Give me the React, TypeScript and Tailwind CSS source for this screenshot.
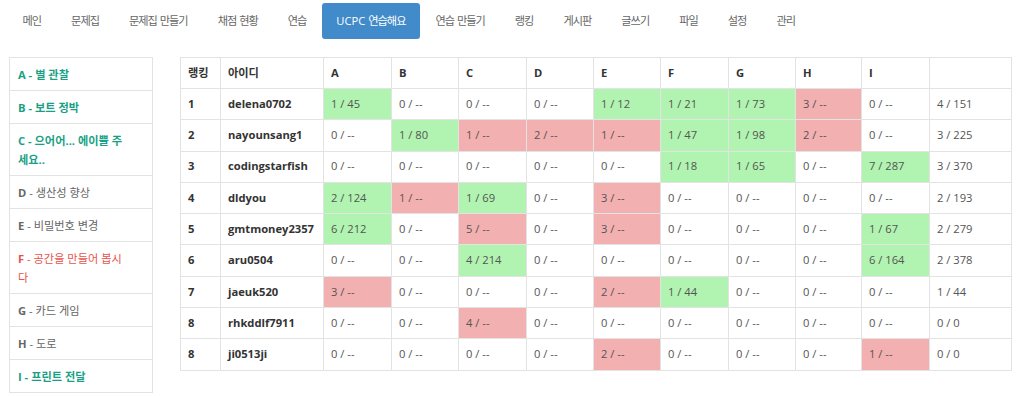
import React from "react";

const NAV = ["메인", "문제집", "문제집 만들기", "채점 현황", "연습", "UCPC 연습해요", "연습 만들기", "랭킹", "게시판", "글쓰기", "파일", "설정", "관리"];

type Prob = { letter: string; title: string; tone: "green" | "gray" | "red" };
const PROBS: Prob[] = [
  { letter: "A", title: "별 관찰", tone: "green" },
  { letter: "B", title: "보트 정박", tone: "green" },
  { letter: "C", title: "으어어... 에이쁠 주세요..", tone: "green" },
  { letter: "D", title: "생산성 향상", tone: "gray" },
  { letter: "E", title: "비밀번호 변경", tone: "gray" },
  { letter: "F", title: "공간을 만들어 봅시다", tone: "red" },
  { letter: "G", title: "카드 게임", tone: "gray" },
  { letter: "H", title: "도로", tone: "gray" },
  { letter: "I", title: "프린트 전달", tone: "green" },
];

const ROWS: { rank: string; id: string; cells: [string, string][]; total: string }[] = [
  { rank: "1", id: "delena0702", cells: [["1 / 45", "g"], ["0 / --", ""], ["0 / --", ""], ["0 / --", ""], ["1 / 12", "g"], ["1 / 21", "g"], ["1 / 73", "g"], ["3 / --", "r"], ["0 / --", ""]], total: "4 / 151" },
  { rank: "2", id: "nayounsang1", cells: [["0 / --", ""], ["1 / 80", "g"], ["1 / --", "r"], ["2 / --", "r"], ["1 / --", "r"], ["1 / 47", "g"], ["1 / 98", "g"], ["2 / --", "r"], ["0 / --", ""]], total: "3 / 225" },
  { rank: "3", id: "codingstarfish", cells: [["0 / --", ""], ["0 / --", ""], ["0 / --", ""], ["0 / --", ""], ["0 / --", ""], ["1 / 18", "g"], ["1 / 65", "g"], ["0 / --", ""], ["7 / 287", "g"]], total: "3 / 370" },
  { rank: "4", id: "dldyou", cells: [["2 / 124", "g"], ["1 / --", "r"], ["1 / 69", "g"], ["0 / --", ""], ["3 / --", "r"], ["0 / --", ""], ["0 / --", ""], ["0 / --", ""], ["0 / --", ""]], total: "2 / 193" },
  { rank: "5", id: "gmtmoney2357", cells: [["6 / 212", "g"], ["0 / --", ""], ["5 / --", "r"], ["0 / --", ""], ["3 / --", "r"], ["0 / --", ""], ["0 / --", ""], ["0 / --", ""], ["1 / 67", "g"]], total: "2 / 279" },
  { rank: "6", id: "aru0504", cells: [["0 / --", ""], ["0 / --", ""], ["4 / 214", "g"], ["0 / --", ""], ["0 / --", ""], ["0 / --", ""], ["0 / --", ""], ["0 / --", ""], ["6 / 164", "g"]], total: "2 / 378" },
  { rank: "7", id: "jaeuk520", cells: [["3 / --", "r"], ["0 / --", ""], ["0 / --", ""], ["0 / --", ""], ["2 / --", "r"], ["1 / 44", "g"], ["0 / --", ""], ["0 / --", ""], ["0 / --", ""]], total: "1 / 44" },
  { rank: "8", id: "rhkddlf7911", cells: [["0 / --", ""], ["0 / --", ""], ["4 / --", "r"], ["0 / --", ""], ["0 / --", ""], ["0 / --", ""], ["0 / --", ""], ["0 / --", ""], ["0 / --", ""]], total: "0 / 0" },
  { rank: "8", id: "ji0513ji", cells: [["0 / --", ""], ["0 / --", ""], ["0 / --", ""], ["0 / --", ""], ["2 / --", "r"], ["0 / --", ""], ["0 / --", ""], ["0 / --", ""], ["1 / --", "r"]], total: "0 / 0" },
];

const COLW = ["w-[40px]", "w-[103px]", "w-[68px]", "w-[67px]", "w-[68px]", "w-[67px]", "w-[67px]", "w-[68px]", "w-[67px]", "w-[66px]", "w-[68px]", ""];
const HEAD = ["랭킹", "아이디", "A", "B", "C", "D", "E", "F", "G", "H", "I", ""];

function Tight({ text }: { text: string }) {
  const parts = text.split(/([\uAC00-\uD7A3]+)/);
  return (
    <span className="whitespace-pre">
      {parts.map((p, i) =>
        /[\uAC00-\uD7A3]/.test(p) ? (
          <span key={i} className="tracking-[-1px]">
            {p}
          </span>
        ) : (
          <span key={i}>{p}</span>
        )
      )}
    </span>
  );
}

export default function App() {
  return (
    <div className="w-[1024px] h-[396px] bg-white overflow-hidden text-[11.2px] text-[#555]" style={{ fontFamily: '"Open Sans", "Noto Sans CJK KR", sans-serif' }}>
      <nav className="flex pl-[8px] pt-[3px]">
        {NAV.map((n) => {
          const active = n === "UCPC 연습해요";
          return (
            <div
              key={n}
              className={
                "h-[36px] px-[14.5px] mr-[1px] flex items-center rounded-[3px] whitespace-nowrap " +
                (active ? "bg-[#428bca] text-white" : "text-[#666]")
              }
            >
              <Tight text={n} />
            </div>
          );
        })}
      </nav>
      <div className="flex mt-[18px] pl-[9px]">
        <div className="w-[144px] shrink-0 border border-[#e3e3e3] divide-y divide-[#e3e3e3] self-start">
          {PROBS.map((p) => (
            <div
              key={p.letter}
              className={
                "pl-[8px] pr-[26px] pt-[7px] pb-[6px] leading-[19px] " +
                (p.tone === "green" ? "text-[#1a9f86] font-bold" : p.tone === "red" ? "text-[#e9524a]" : "text-[#666]")
              }
            >
              <span className="font-bold">{p.letter}</span> - {p.title}
            </div>
          ))}
        </div>
        <div className="ml-[27px]">
          <table className="border-collapse w-[832px] table-fixed">
            <thead>
              <tr className="h-[31px]">
                {HEAD.map((h, i) => (
                  <th key={i} className={"border border-[#e3e3e3] text-left font-bold text-[#333] px-[7px] " + COLW[i]}>
                    {h}
                  </th>
                ))}
              </tr>
            </thead>
            <tbody>
              {ROWS.map((r) => (
                <tr key={r.id} className="h-[31.3px]">
                  <td className="border border-[#e3e3e3] px-[7px] font-bold text-[#333]">{r.rank}</td>
                  <td className="border border-[#e3e3e3] px-[7px] font-bold text-[#333]">{r.id}</td>
                  {r.cells.map(([t, c], i) => (
                    <td
                      key={i}
                      className={
                        "border border-[#e3e3e3] px-[7px] " +
                        (c === "g" ? "bg-[#b1f3b0]" : c === "r" ? "bg-[#f3b0b0]" : "")
                      }
                    >
                      {t}
                    </td>
                  ))}
                  <td className="border border-[#e3e3e3] px-[7px]">{r.total}</td>
                </tr>
              ))}
            </tbody>
          </table>
        </div>
      </div>
    </div>
  );
}
